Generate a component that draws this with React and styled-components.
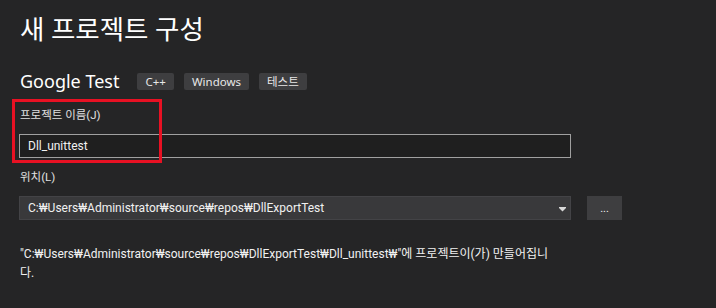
import React from 'react';
import styled, { createGlobalStyle } from 'styled-components';

const GlobalStyle = createGlobalStyle`
    html, body {
        margin: 0;
        padding: 0;
        background-color: #252526;
    }
    body {
        font-family: Roboto, "Noto Sans CJK KR", sans-serif;
        color: #f1f1f1;
    }
`;

const tags = ['C++', 'Windows', '테스트'];

const App = () => {
    return (
        <Page>
            <GlobalStyle />
            <Title>새 프로젝트 구성</Title>
            <TemplateRow>
                <TemplateName>Google Test</TemplateName>
                {tags.map((t) => (
                    <Tag key={t}>{t}</Tag>
                ))}
            </TemplateRow>

            <Field>
                <Highlight />
                <Label>프로젝트 이름(J)</Label>
                <TextInput defaultValue="Dll_unittest" />
            </Field>

            <Field>
                <Label>위치(L)</Label>
                <LocationRow>
                    <Select>
                        <span>C:₩Users₩Administrator₩source₩repos₩DllExportTest</span>
                        <svg width="7" height="5" viewBox="0 0 7 5">
                            <path d="M0 0h7v1L3.5 4.5 0 1z" fill="#d8d8d8" />
                        </svg>
                    </Select>
                    <BrowseButton>...</BrowseButton>
                </LocationRow>
            </Field>

            <Note>
                "C:₩Users₩Administrator₩source₩repos₩DllExportTest₩Dll_unittest₩"에 프로젝트이(가) 만들어집니다.
            </Note>
        </Page>
    );
};

const Page = styled.div`
    width: 716px;
    height: 308px;
    box-sizing: border-box;
    padding: 11px 20px 0 19px;
    background-color: #252526;
    overflow: hidden;
`;

const Title = styled.h1`
    margin: 0 0 0 1px;
    font-size: 26.5px;
    font-weight: 400;
    line-height: 38px;
    color: #ffffff;
`;

const TemplateRow = styled.div`
    display: flex;
    align-items: center;
    gap: 10px;
    margin-top: 20px;
    margin-left: 1px;
`;

const TemplateName = styled.span`
    font-family: "Noto Sans", sans-serif;
    font-size: 18px;
    line-height: 24px;
    color: #ffffff;
    margin-right: 8px;
`;

const Tag = styled.span`
    background-color: #3e3e40;
    border-radius: 2px;
    padding: 0 8px;
    height: 17px;
    line-height: 17px;
    font-family: "Noto Sans", "Noto Sans CJK KR", sans-serif;
    font-size: 11.5px;
    color: #e8e8e8;
`;

const Field = styled.div`
    position: relative;
    display: flex;
    flex-direction: column;
    margin-top: 13px;

    & + & {
        margin-top: 10px;
    }
`;

const Highlight = styled.div`
    position: absolute;
    left: -7px;
    top: -7px;
    width: 150px;
    height: 64px;
    box-sizing: border-box;
    border: 3px solid #e81123;
    pointer-events: none;
`;

const Label = styled.label`
    margin-left: 1px;
    font-size: 11.5px;
    line-height: 18px;
    color: #e0e0e0;
    margin-bottom: 10px;
`;

const TextInput = styled.input`
    width: 552px;
    height: 24px;
    box-sizing: border-box;
    border: 1px solid #a0a0a0;
    background-color: #1f1f1f;
    color: #f1f1f1;
    font-family: inherit;
    font-size: 12px;
    padding: 0 8px;
    outline: none;
`;

const LocationRow = styled.div`
    display: flex;
    align-items: center;
    gap: 16px;
`;

const Select = styled.div`
    width: 552px;
    height: 24px;
    box-sizing: border-box;
    border: 1px solid #434346;
    background-color: #39393b;
    display: flex;
    align-items: center;
    justify-content: space-between;
    padding: 0 4px 0 8px;
    font-size: 12px;
    color: #f1f1f1;

    & svg {
        margin-top: 2px;
    }
`;

const BrowseButton = styled.button`
    width: 35px;
    height: 24px;
    border: none;
    background-color: #3e3e40;
    color: #f1f1f1;
    font-family: inherit;
    font-size: 11px;
    padding: 0;
`;

const Note = styled.p`
    margin: 25px 0 0 1px;
    max-width: 535px;
    font-size: 12px;
    line-height: 19px;
    color: #f1f1f1;
    word-break: break-all;
`;

export default App;
